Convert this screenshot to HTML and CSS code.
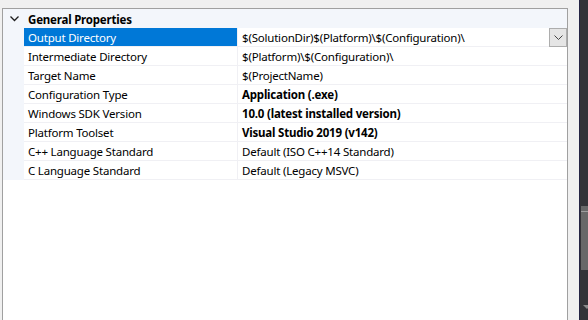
FILE: index.html
```html
<!DOCTYPE html>
<html>
<head>
    <meta charset="UTF-8">
    <title>Property Pages</title>
    <link rel="stylesheet" href="styles.css">
</head>
<body>
    <div id="page">
        <div class="grid">
            <div class="group">
                <span class="toggle">
                    <svg width="9" height="6" viewBox="0 0 9 6"><path d="M0.5 0.5 L4.5 4.5 L8.5 0.5" fill="none" stroke="#1e1e1e" stroke-width="1.3"/></svg>
                </span>
                <span class="group-title">General Properties</span>
            </div>
            <div class="row selected">
                <div class="gutter"></div>
                <div class="name">Output Directory</div>
                <div class="value">$(SolutionDir)$(Platform)\$(Configuration)\
                    <span class="drop">
                        <svg width="9" height="5" viewBox="0 0 9 5"><path d="M0.5 0.5 L4.5 4.5 L8.5 0.5" fill="none" stroke="#444" stroke-width="1"/></svg>
                    </span>
                </div>
            </div>
            <div class="row">
                <div class="gutter"></div>
                <div class="name">Intermediate Directory</div>
                <div class="value">$(Platform)\$(Configuration)\</div>
            </div>
            <div class="row">
                <div class="gutter"></div>
                <div class="name">Target Name</div>
                <div class="value">$(ProjectName)</div>
            </div>
            <div class="row">
                <div class="gutter"></div>
                <div class="name">Configuration Type</div>
                <div class="value bold">Application (.exe)</div>
            </div>
            <div class="row">
                <div class="gutter"></div>
                <div class="name">Windows SDK Version</div>
                <div class="value bold">10.0 (latest installed version)</div>
            </div>
            <div class="row">
                <div class="gutter"></div>
                <div class="name">Platform Toolset</div>
                <div class="value bold">Visual Studio 2019 (v142)</div>
            </div>
            <div class="row">
                <div class="gutter"></div>
                <div class="name">C++ Language Standard</div>
                <div class="value">Default (ISO C++14 Standard)</div>
            </div>
            <div class="row">
                <div class="gutter"></div>
                <div class="name">C Language Standard</div>
                <div class="value">Default (Legacy MSVC)</div>
            </div>
        </div>
        <div class="gap"></div>
        <div class="dark">
            <div class="thumb"></div>
            <span class="arrow"></span>
        </div>
    </div>
</body>
</html>
```

FILE: styles.css
```css
*{ margin: 0; padding: 0; box-sizing: border-box;}
body{
    background: #f0f0f0;
    font-family: "Noto Sans", "Open Sans", sans-serif;
    font-size: 11.5px;
    letter-spacing: -0.2px;
    color: #000;
    overflow: hidden;
}
#page{
    display: flex;
    height: 320px;
    padding-left: 2px;
}
.grid{
    width: 566px;
    margin-top: 8px;
    background: #fff;
    border: 1px solid #a0a0a0;
    border-bottom: none;
}
.group{
    display: flex;
    align-items: center;
    height: 19px;
    padding-top: 1px;
    background: #f3f6fb;
    font-weight: bold;
}
.group .toggle{
    display: flex;
    justify-content: center;
    width: 21px;
    padding-left: 1px;
    padding-bottom: 1px;
}
.group-title{
    padding-left: 4px;
}
.row{
    display: flex;
    height: 19px;
}
.row .gutter{
    width: 21px;
    background: #f3f6fb;
}
.row .name{
    width: 213px;
    padding: 1px 0 0 4px;
    line-height: 18px;
    border-bottom: 1px solid #f0f0f4;
    white-space: nowrap;
}
.row .value{
    position: relative;
    flex: 1;
    padding: 1px 0 0 4px;
    line-height: 18px;
    border-left: 1px solid #f0f0f4;
    border-bottom: 1px solid #f0f0f4;
    white-space: nowrap;
}
.row .value.bold{
    font-weight: bold;
}
.row.selected .name{
    background: #0078d7;
    color: #fff;
}
.drop{
    position: absolute;
    right: 0;
    top: 0;
    width: 18px;
    height: 19px;
    display: flex;
    align-items: center;
    justify-content: center;
    background: #e5e5e5;
    border: 1px solid #adadad;
}
.gap{
    width: 11px;
}
.dark{
    position: relative;
    width: 9px;
    background: #333337;
    border-left: 1px solid #252545;
}
.dark .thumb{
    position: absolute;
    left: 1px;
    right: 0;
    top: 206px;
    height: 64px;
    background: #686868;
    border-top: 5px solid #686868;
    box-shadow: inset 0 1px 0 #9e9e9e;
}
.dark .arrow{
    position: absolute;
    left: 3px;
    top: 305px;
    border-left: 4px solid transparent;
    border-right: 4px solid transparent;
    border-top: 4px solid #8a8a8a;
}
```
